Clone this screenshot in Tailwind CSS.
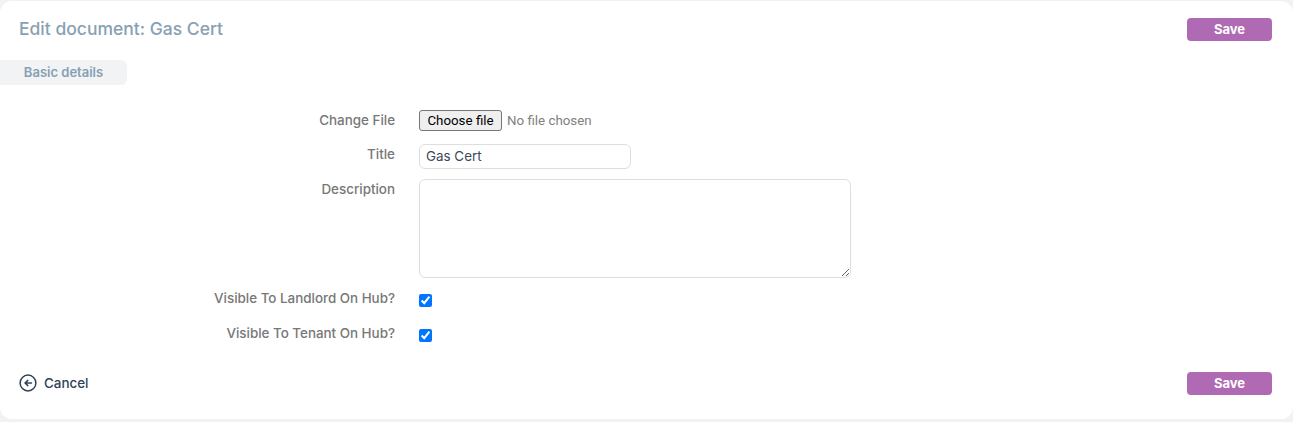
<!DOCTYPE html>
<html lang="en">
<head>
  <meta charset="UTF-8" />
  <meta name="viewport" content="width=device-width, initial-scale=1.0" />
  <title>Edit document</title>
  <script src="https://cdn.jsdelivr.net/npm/@tailwindcss/browser@4"></script>
</head>
<body class="h-[422px] overflow-hidden bg-[#f1f2f3] pt-px font-['Inter',sans-serif]">
  <div class="flex h-[418px] flex-col rounded-xl bg-white">
    <!-- Header -->
    <div class="flex h-[57px] items-center justify-between pl-[19px] pr-[21px]">
      <h1 class="text-[17.5px] font-medium text-[#87a0b2]">Edit document: Gas Cert</h1>
      <button class="h-[23px] w-[85px] rounded bg-[#b06ab3] text-[13px] font-bold text-white">Save</button>
    </div>

    <!-- Tab -->
    <div class="mt-[2px] flex h-[25px] w-[127px] items-center justify-center rounded-r-md bg-[#f1f3f5] text-[13px] font-semibold text-[#87a0b2]">Basic details</div>

    <!-- Form -->
    <form class="mt-[17px] flex flex-col text-[13.4px] font-medium text-[#777]">
      <div class="flex h-[36px] items-center gap-6">
        <label class="w-[395px] text-right">Change File</label>
        <label class="flex items-center gap-[5px] pt-px font-['Roboto',sans-serif] text-[13.33px] font-normal">
          <input type="file" class="hidden" />
          <span class="flex h-[21px] w-[83px] items-center justify-center rounded-[3px] border border-[#767676] bg-[#efefef] pt-px text-black">Choose file</span>
          <span class="pt-px text-[#808080]">No file chosen</span>
        </label>
      </div>
      <div class="mt-[6px] flex items-start gap-6">
        <label class="w-[395px] text-right">Title</label>
        <input type="text" value="Gas Cert" class="h-[25px] w-[212px] rounded-md border border-[#dedede] px-[6px] pb-[2px] text-[13.4px] font-normal text-[#3a4a5a]" />
      </div>
      <div class="mt-[10px] flex items-start gap-6">
        <label class="w-[395px] text-right">Description</label>
        <textarea class="h-[99px] w-[432px] rounded-md border border-[#dedede]"></textarea>
      </div>
      <div class="mt-[11px] flex h-[23px] items-center gap-6">
        <label class="w-[395px] pb-[4px] text-right">Visible To Landlord On Hub?</label>
        <input type="checkbox" checked class="m-0 size-[13px] accent-[#0075ff]" />
      </div>
      <div class="mt-[12px] flex h-[23px] items-center gap-6">
        <label class="w-[395px] pb-[4px] text-right">Visible To Tenant On Hub?</label>
        <input type="checkbox" checked class="m-0 size-[13px] accent-[#0075ff]" />
      </div>
    </form>

    <!-- Footer -->
    <div class="mt-[25px] flex items-center justify-between pl-[19px] pr-[21px]">
      <a href="#" class="flex items-center gap-[7px] text-[13.4px] font-medium text-[#2f4356]">
        <svg class="size-[18px]" viewBox="0 0 18 18" fill="none" stroke="currentColor" stroke-width="1.5" stroke-linecap="round" stroke-linejoin="round">
          <circle cx="9" cy="9" r="7.9" />
          <path d="M12.5 9H6M8.8 6.4L6 9L8.8 11.6" />
        </svg>
        Cancel
      </a>
      <button class="h-[23px] w-[85px] rounded bg-[#b06ab3] text-[13px] font-bold text-white">Save</button>
    </div>
  </div>
</body>
</html>
